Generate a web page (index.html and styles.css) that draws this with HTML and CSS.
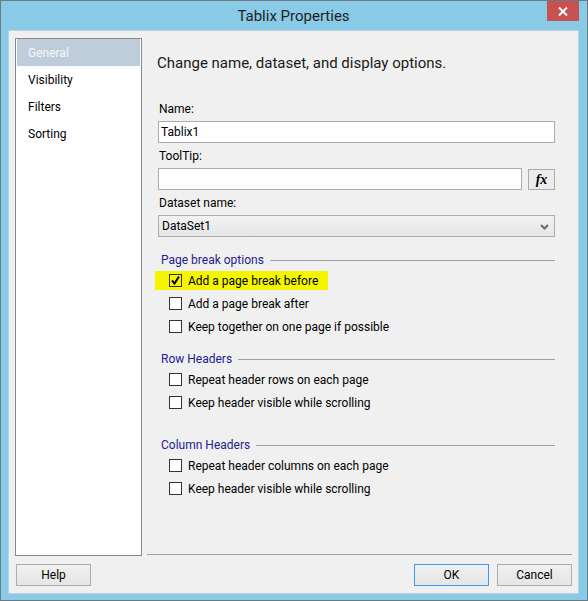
FILE: index.html
```html
<!DOCTYPE html>
<html>
<head>
<meta charset="utf-8">
<title>Tablix Properties</title>
<link rel="stylesheet" href="styles.css">
</head>
<body>
<div class="window">
  <div class="titlebar">
    <span class="title">Tablix Properties</span>
    <button class="close" aria-label="Close">
      <svg width="10" height="9" viewBox="0 0 10 9"><path d="M1 0.5 L9 8.5 M9 0.5 L1 8.5" stroke="#fff" stroke-width="2" fill="none"/></svg>
    </button>
  </div>
  <div class="panel">
    <div class="main">
      <ul class="nav">
        <li class="nav-item selected">General</li>
        <li class="nav-item">Visibility</li>
        <li class="nav-item">Filters</li>
        <li class="nav-item">Sorting</li>
      </ul>
      <div class="pane">
        <h1 class="heading">Change name, dataset, and display options.</h1>
        <label class="label first">Name:</label>
        <div class="textbox">Tablix1</div>
        <label class="label">ToolTip:</label>
        <div class="field-row">
          <div class="textbox grow"></div>
          <button class="fx">fx</button>
        </div>
        <label class="label">Dataset name:</label>
        <div class="select">
          <span>DataSet1</span>
          <svg class="chev" width="9" height="6" viewBox="0 0 9 6"><path d="M1 1 L4.5 4.5 L8 1" stroke="#6a6a6a" stroke-width="2" fill="none"/></svg>
        </div>

        <div class="group g1">
          <div class="group-head"><span>Page break options</span><i class="rule"></i></div>
          <div class="check hl"><span class="box checked"><svg width="11" height="11" viewBox="0 0 11 11"><path d="M2 5.5 L4.5 8.5 L9 1.5" stroke="#000" stroke-width="2" fill="none"/></svg></span><span>Add a page break before</span></div>
          <div class="check"><span class="box"></span><span>Add a page break after</span></div>
          <div class="check"><span class="box"></span><span>Keep together on one page if possible</span></div>
        </div>

        <div class="group g2">
          <div class="group-head"><span>Row Headers</span><i class="rule"></i></div>
          <div class="check"><span class="box"></span><span>Repeat header rows on each page</span></div>
          <div class="check"><span class="box"></span><span>Keep header visible while scrolling</span></div>
        </div>

        <div class="group g3">
          <div class="group-head"><span>Column Headers</span><i class="rule"></i></div>
          <div class="check"><span class="box"></span><span>Repeat header columns on each page</span></div>
          <div class="check"><span class="box"></span><span>Keep header visible while scrolling</span></div>
        </div>
      </div>
    </div>
    <div class="footer">
      <button class="btn">Help</button>
      <div class="spacer"></div>
      <button class="btn default">OK</button>
      <button class="btn">Cancel</button>
    </div>
  </div>
</div>
</body>
</html>
```
FILE: styles.css
```css
* { box-sizing: border-box; }
html, body { margin: 0; padding: 0; }
body {
  width: 588px;
  height: 601px;
  background: #ffffff;
  font-family: Roboto, "Noto Sans", sans-serif;
  font-size: 12px;
  color: #000;
  overflow: hidden;
}
.window {
  width: 588px;
  height: 601px;
  border: 1px solid #6f7a80;
  background: #89cae6;
  padding: 0 8px 7px 7px;
  display: flex;
  flex-direction: column;
}
.titlebar {
  position: relative;
  height: 29px;
  flex: none;
  text-align: center;
  line-height: 31px;
}
.title {
  font-size: 15px;
  color: #1f1f1f;
}
.close {
  position: absolute;
  top: 0;
  right: 0;
  width: 32px;
  height: 20px;
  border: none;
  padding: 0;
  background: #c75050;
  display: flex;
  align-items: center;
  justify-content: center;
}
.panel {
  flex: 1;
  border: 1px solid #b9d3e0;
  background: #f0f0f0;
  padding: 7px 6px 7px 6px;
  display: flex;
  flex-direction: column;
}
.main {
  flex: 1;
  display: flex;
  gap: 5px;
}
.nav {
  list-style: none;
  margin: 0;
  padding: 0 1px;
  width: 127px;
  height: 518px;
  border: 1px solid #86898f;
  background: #fff;
}
.nav-item {
  height: 27px;
  line-height: 29px;
  padding-left: 11px;
  overflow: hidden;
}
.nav-item.selected {
  background: #bfcddb;
  color: #f7f7f7;
}
.pane {
  flex: 1;
  height: 517px;
  border-bottom: 1px solid #a0a0a0;
  padding: 0 17px 0 11px;
  display: flex;
  flex-direction: column;
}
.heading {
  margin: 14px 0 0 -1px;
  padding-top: 1px;
  font-weight: normal;
  font-size: 15px;
  line-height: 20px;
  color: #1a1a1a;
}
.label {
  display: block;
  line-height: 16px;
  margin: 5px 0 4px 1px;
}
.label.first { margin-top: 28px; }
.textbox {
  height: 22px;
  border: 1px solid #acacac;
  background: #fff;
  line-height: 20px;
  padding-left: 2px;
}
.field-row {
  display: flex;
  align-items: flex-start;
  gap: 6px;
}
.grow { flex: 1; }
.fx {
  width: 27px;
  height: 21px;
  margin-top: 1px;
  border: 1px solid #acacac;
  background: #ececec;
  padding: 0;
  font-family: "Liberation Serif", serif;
  font-style: italic;
  font-weight: bold;
  font-size: 14px;
  line-height: 18px;
  color: #000;
}
.select {
  height: 22px;
  border: 1px solid #acacac;
  background: linear-gradient(#f2f2f2, #e5e5e5);
  display: flex;
  align-items: center;
  justify-content: space-between;
  padding: 0 5px 0 3px;
}
.chev { margin-top: 1px; }
.group { display: flex; flex-direction: column; }
.g1 { margin-top: 15px; }
.g2 { margin-top: 15px; }
.g3 { margin-top: 25px; }
.group-head {
  display: flex;
  align-items: center;
  gap: 6px;
  line-height: 16px;
  padding-left: 3px;
  color: #24218f;
}
.rule {
  flex: 1;
  height: 1px;
  background: #a0a0a0;
  margin-top: 1px;
}
.check {
  display: flex;
  align-items: center;
  height: 19px;
  margin-top: 4px;
  padding-left: 11px;
  gap: 6px;
}
.group-head + .check { margin-top: 3px; }
.check.hl {
  align-self: flex-start;
  margin-left: -3px;
  padding-left: 14px;
  padding-right: 10px;
  background: #f5f500;
}
.box {
  width: 13px;
  height: 13px;
  border: 1px solid #333;
  background: #fff;
  display: flex;
  align-items: center;
  justify-content: center;
}
.box.checked { background: transparent; }
.footer {
  flex: none;
  display: flex;
  gap: 8px;
  margin-top: 8px;
  padding-left: 1px;
}
.spacer { flex: 1; }
.btn {
  width: 75px;
  height: 22px;
  border: 1px solid #acacac;
  background: linear-gradient(#f0f0f0, #e5e5e5);
  font-family: Roboto, "Noto Sans", sans-serif;
  font-size: 12px;
  color: #000;
  padding: 0;
}
.btn.default { border-color: #3c9aea; }
```
